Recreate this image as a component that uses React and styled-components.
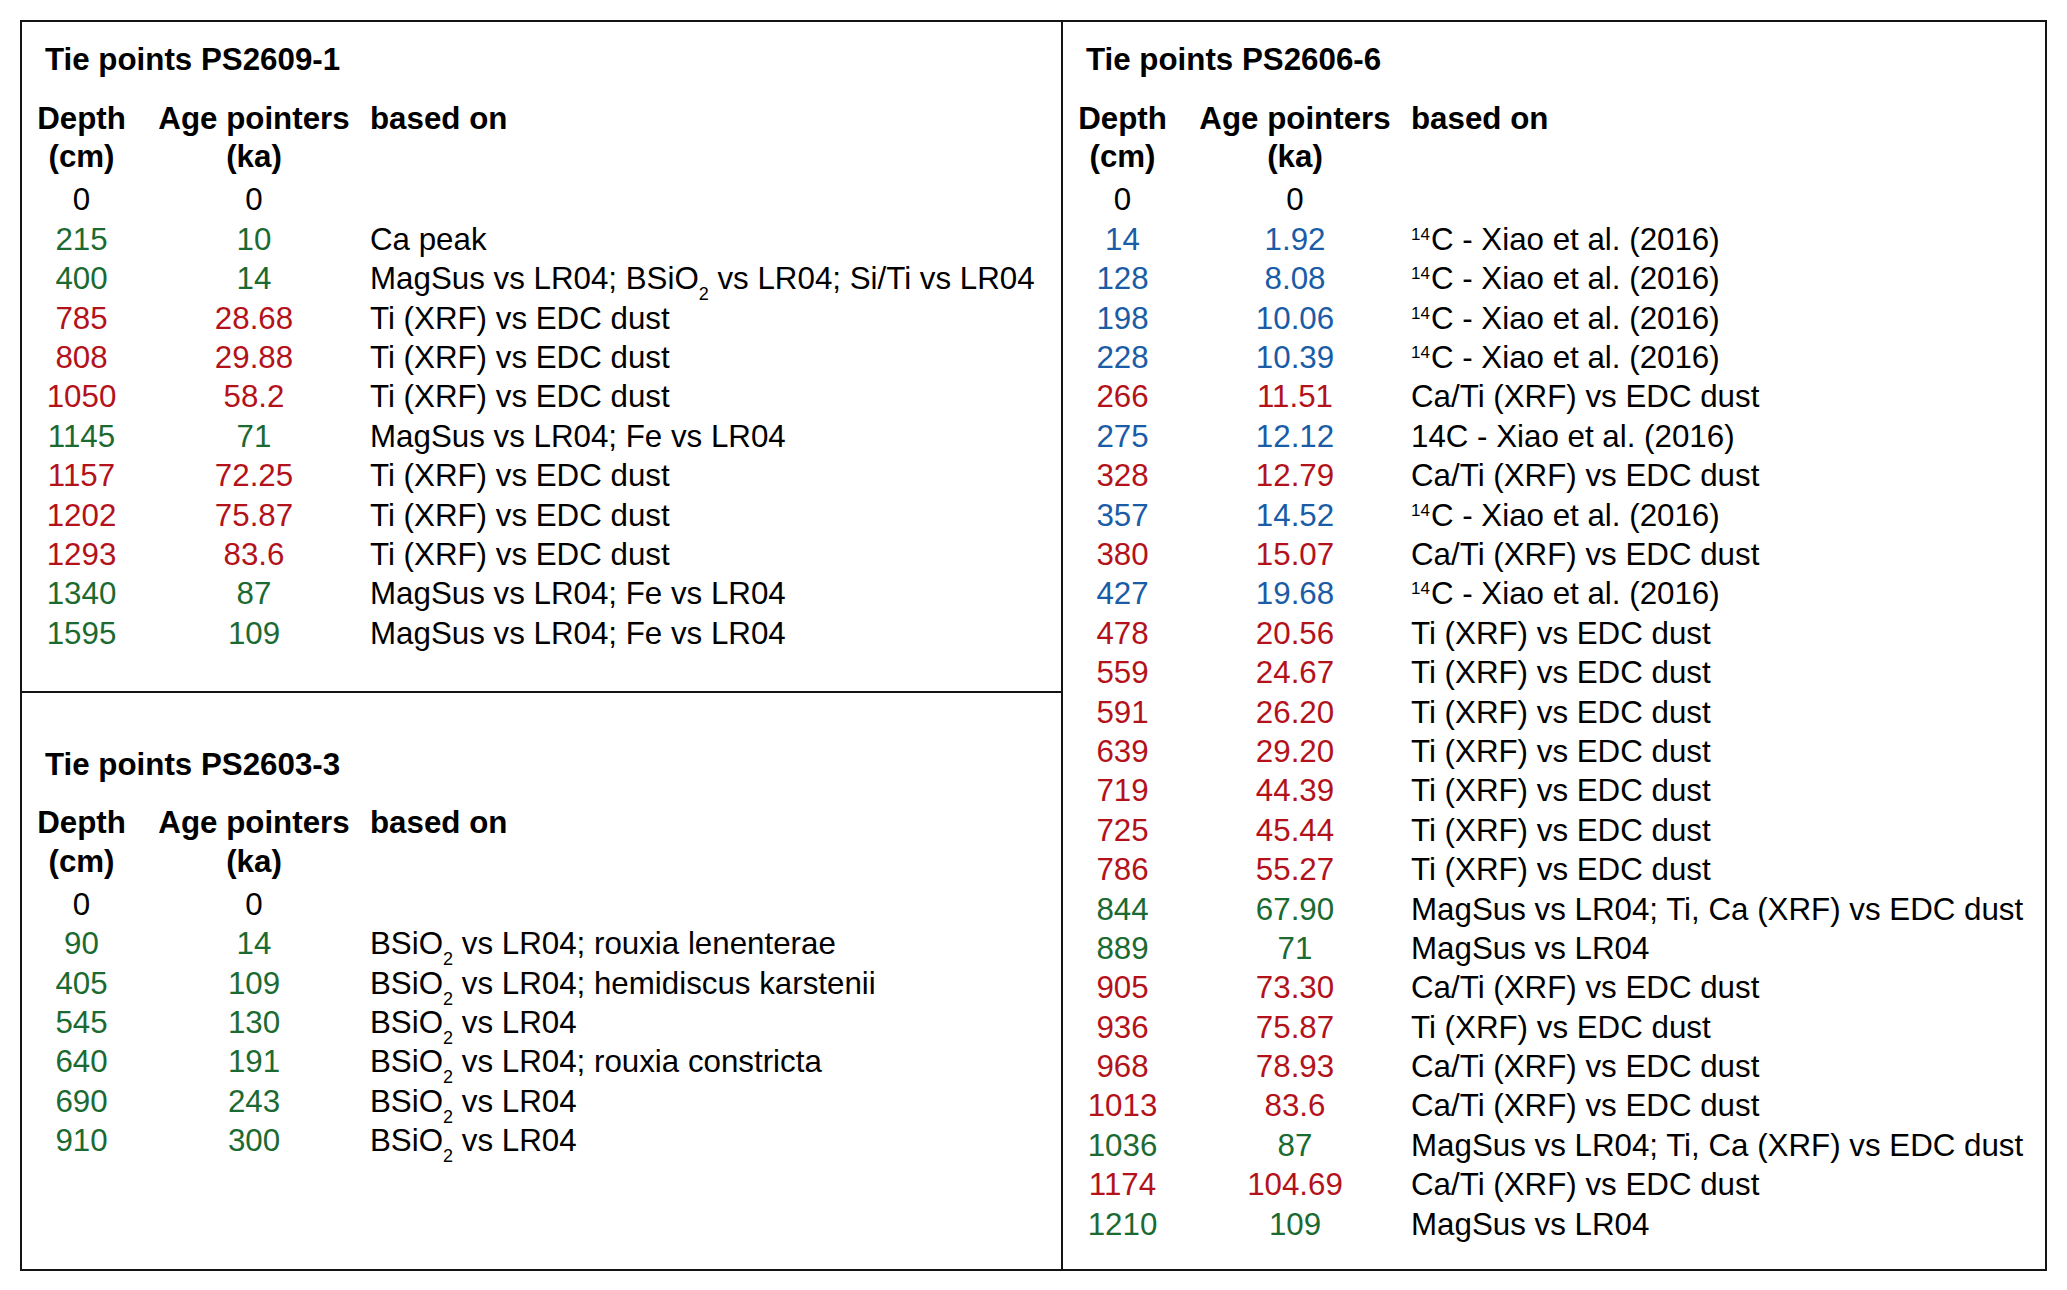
import React from 'react';
import styled, { createGlobalStyle } from 'styled-components';

const GlobalStyle = createGlobalStyle`
  html, body { margin: 0; padding: 0; background: #ffffff; }
  body {
    font-family: "Liberation Sans", Arial, Helvetica, sans-serif;
    color: #000000;
    width: 2067px;
    height: 1290px;
    overflow: hidden;
  }
  * { box-sizing: border-box; }
`;

const TONES = {
  black: '#000000',
  green: '#1b6a32',
  red: '#b3121b',
  blue: '#1a5ca6',
};

const LINE = '#141414';

const Frame = styled.div`
  margin: 20px 0 0 20px;
  width: 2027px;
  height: 1251px;
  border: 2px solid ${LINE};
  display: grid;
  grid-template-columns: 1039px 1fr;
`;

const LeftColumn = styled.div`
  display: grid;
  grid-template-rows: 669px 1fr;
  min-height: 0;
`;

const Panel = styled.section`
  padding-top: ${(p) => p.$padTop}px;
  border-top: ${(p) => (p.$divTop ? `2px solid ${LINE}` : 'none')};
  border-left: ${(p) => (p.$divLeft ? `2px solid ${LINE}` : 'none')};
  min-width: 0;
  font-size: 31.3px;
`;

const Title = styled.h2`
  margin: 0 0 20px;
  padding-left: 23px;
  font-size: 31.3px;
  font-weight: 700;
  line-height: 39.5px;
  white-space: nowrap;
`;

const HeaderRow = styled.div`
  display: grid;
  grid-template-columns: 119px 226px 1fr;
  font-weight: 700;
  line-height: 38.5px;
  margin-bottom: 3.6px;
  white-space: nowrap;
`;

const DataRow = styled.div`
  display: grid;
  grid-template-columns: 119px 226px 1fr;
  line-height: 39.4px;
  height: 39.4px;
  white-space: nowrap;
`;

const NumCell = styled.div`
  text-align: center;
  color: ${(p) => TONES[p.$tone] || TONES.black};
`;

const TextCell = styled.div`
  padding-left: 3px;
  color: #000000;
`;

const Sub = styled.sub`
  font-size: 18px;
  line-height: 0;
  vertical-align: -11px;
`;

const Sup = styled.sup`
  font-size: 17px;
  line-height: 0;
  vertical-align: 10px;
  margin-right: 1px;
`;

const BSiO2 = () => (
  <>
    BSiO<Sub>2</Sub>
  </>
);

const C14 = () => (
  <>
    <Sup>14</Sup>C - Xiao et al. (2016)
  </>
);

const TI_EDC = 'Ti (XRF) vs EDC dust';
const CATI_EDC = 'Ca/Ti (XRF) vs EDC dust';
const MAG_FE = 'MagSus vs LR04; Fe vs LR04';

const ps2609 = [
  ['0', '0', 'black', ''],
  ['215', '10', 'green', 'Ca peak'],
  [
    '400',
    '14',
    'green',
    <>
      MagSus vs LR04; <BSiO2 /> vs LR04; Si/Ti vs LR04
    </>,
  ],
  ['785', '28.68', 'red', TI_EDC],
  ['808', '29.88', 'red', TI_EDC],
  ['1050', '58.2', 'red', TI_EDC],
  ['1145', '71', 'green', MAG_FE],
  ['1157', '72.25', 'red', TI_EDC],
  ['1202', '75.87', 'red', TI_EDC],
  ['1293', '83.6', 'red', TI_EDC],
  ['1340', '87', 'green', MAG_FE],
  ['1595', '109', 'green', MAG_FE],
];

const ps2603 = [
  ['0', '0', 'black', ''],
  ['90', '14', 'green', <><BSiO2 /> vs LR04; rouxia lenenterae</>],
  ['405', '109', 'green', <><BSiO2 /> vs LR04; hemidiscus karstenii</>],
  ['545', '130', 'green', <><BSiO2 /> vs LR04</>],
  ['640', '191', 'green', <><BSiO2 /> vs LR04; rouxia constricta</>],
  ['690', '243', 'green', <><BSiO2 /> vs LR04</>],
  ['910', '300', 'green', <><BSiO2 /> vs LR04</>],
];

const ps2606 = [
  ['0', '0', 'black', ''],
  ['14', '1.92', 'blue', <C14 />],
  ['128', '8.08', 'blue', <C14 />],
  ['198', '10.06', 'blue', <C14 />],
  ['228', '10.39', 'blue', <C14 />],
  ['266', '11.51', 'red', CATI_EDC],
  ['275', '12.12', 'blue', '14C - Xiao et al. (2016)'],
  ['328', '12.79', 'red', CATI_EDC],
  ['357', '14.52', 'blue', <C14 />],
  ['380', '15.07', 'red', CATI_EDC],
  ['427', '19.68', 'blue', <C14 />],
  ['478', '20.56', 'red', TI_EDC],
  ['559', '24.67', 'red', TI_EDC],
  ['591', '26.20', 'red', TI_EDC],
  ['639', '29.20', 'red', TI_EDC],
  ['719', '44.39', 'red', TI_EDC],
  ['725', '45.44', 'red', TI_EDC],
  ['786', '55.27', 'red', TI_EDC],
  ['844', '67.90', 'green', 'MagSus vs LR04; Ti, Ca (XRF) vs EDC dust'],
  ['889', '71', 'green', 'MagSus vs LR04'],
  ['905', '73.30', 'red', CATI_EDC],
  ['936', '75.87', 'red', TI_EDC],
  ['968', '78.93', 'red', CATI_EDC],
  ['1013', '83.6', 'red', CATI_EDC],
  ['1036', '87', 'green', 'MagSus vs LR04; Ti, Ca (XRF) vs EDC dust'],
  ['1174', '104.69', 'red', CATI_EDC],
  ['1210', '109', 'green', 'MagSus vs LR04'],
];

const TiePointTable = ({ title, rows }) => (
  <>
    <Title>{title}</Title>
    <HeaderRow>
      <NumCell>
        Depth
        <br />
        (cm)
      </NumCell>
      <NumCell>
        Age pointers
        <br />
        (ka)
      </NumCell>
      <TextCell>based on</TextCell>
    </HeaderRow>
    {rows.map(([depth, age, tone, basis], i) => (
      <DataRow key={i}>
        <NumCell $tone={tone}>{depth}</NumCell>
        <NumCell $tone={tone}>{age}</NumCell>
        <TextCell>{basis}</TextCell>
      </DataRow>
    ))}
  </>
);

export default function App() {
  return (
    <>
      <GlobalStyle />
      <Frame>
        <LeftColumn>
          <Panel $padTop={18.4}>
            <TiePointTable title="Tie points PS2609-1" rows={ps2609} />
          </Panel>
          <Panel $padTop={51.8} $divTop>
            <TiePointTable title="Tie points PS2603-3" rows={ps2603} />
          </Panel>
        </LeftColumn>
        <Panel $padTop={18.4} $divLeft>
          <TiePointTable title="Tie points PS2606-6" rows={ps2606} />
        </Panel>
      </Frame>
    </>
  );
}
